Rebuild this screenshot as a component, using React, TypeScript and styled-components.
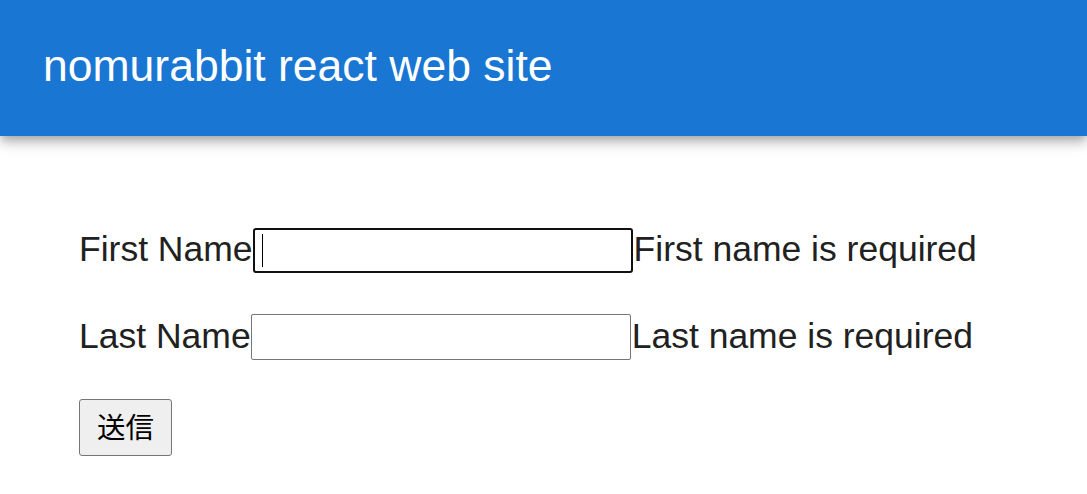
import React from "react";
import styled, { createGlobalStyle } from "styled-components";

const GlobalStyle = createGlobalStyle`
    html, body {
        margin: 0;
        padding: 0;
        background: #fff;
    }
    body {
        font-family: "Liberation Sans", Arial, "Noto Sans CJK JP", sans-serif;
        color: #212121;
    }
`;

const AppBar = styled.header`
    display: flex;
    align-items: center;
    height: 136px;
    padding: 0 43px;
    background-color: #1976d2;
    color: #fff;
    box-shadow: 0px 4px 8px -2px rgba(0, 0, 0, 0.2), 0px 8px 10px 0px rgba(0, 0, 0, 0.14), 0px 2px 20px 0px rgba(0, 0, 0, 0.12);
    position: relative;
    z-index: 1;
`;

const Title = styled.h1`
    margin: 0;
    font-size: 44.5px;
    font-weight: 400;
    line-height: 1;
    letter-spacing: 0;
    transform: translateY(-2px);
`;

const Form = styled.form`
    display: flex;
    flex-direction: column;
    align-items: flex-start;
    padding: 91px 79px 0;
    font-size: 35.5px;
`;

const Row = styled.div`
    display: flex;
    align-items: center;
    height: 46px;
    margin-bottom: 41px;
    white-space: nowrap;
`;

const Label = styled.label`
    line-height: 1;
`;

const Input = styled.input<{ $focused?: boolean }>`
    box-sizing: border-box;
    width: 380px;
    height: ${(p) => (p.$focused ? "45px" : "46px")};
    margin: 0;
    padding: 0 8px;
    font: inherit;
    font-size: 28px;
    background-color: #fff;
    border: ${(p) => (p.$focused ? "2px solid #101010" : "1px solid #767676")};
    border-radius: ${(p) => (p.$focused ? "3px" : "2px")};
    outline: none;
    ${(p) =>
        p.$focused &&
        `background-image: linear-gradient(#000, #000);
        background-repeat: no-repeat;
        background-position: 7px center;
        background-size: 1px 33px;`}
`;

const Error = styled.span`
    line-height: 1;
    margin-left: 1px;
`;

const SubmitButton = styled.button`
    box-sizing: border-box;
    width: 93px;
    height: 57px;
    margin-top: -2px;
    padding: 0 0 4px;
    font-family: "Noto Sans CJK JP", "Liberation Sans", sans-serif;
    font-size: 28.5px;
    color: #000;
    background-color: #efefef;
    border: 1px solid #767676;
    border-radius: 3px;
`;

const fields = [
    { id: "firstName", label: "First Name", error: "First name is required", focused: true },
    { id: "lastName", label: "Last Name", error: "Last name is required", focused: false },
];

export default function App() {
    return (
        <>
            <GlobalStyle />
            <AppBar>
                <Title>nomurabbit react web site</Title>
            </AppBar>
            <Form onSubmit={(e) => e.preventDefault()}>
                {fields.map((f) => (
                    <Row key={f.id}>
                        <Label htmlFor={f.id}>{f.label}</Label>
                        <Input id={f.id} $focused={f.focused} />
                        <Error>{f.error}</Error>
                    </Row>
                ))}
                <SubmitButton type="submit">送信</SubmitButton>
            </Form>
        </>
    );
}
